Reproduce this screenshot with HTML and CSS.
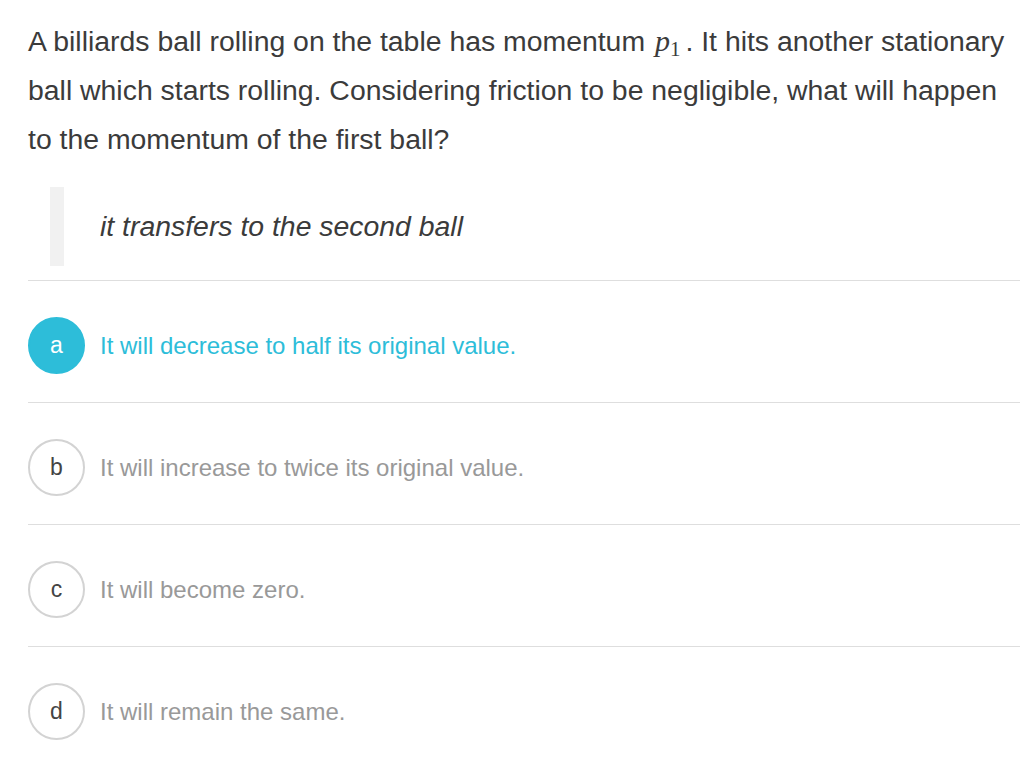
FILE: index.html
```html
<!DOCTYPE html>
<html lang="en">
<head>
<meta charset="utf-8">
<title>Question</title>
<link rel="stylesheet" href="styles.css">
</head>
<body>
<div class="page">
  <p class="question">A billiards ball rolling on the table has momentum <span class="math"><span class="mi">p</span><span class="mn">1</span></span>. It hits another stationary ball which starts rolling. Considering friction to be negligible, what will happen to the momentum of the first ball?</p>
  <blockquote class="answer"><span class="answer-text">it transfers to the second ball</span></blockquote>
  <ul class="options">
    <li class="option selected"><span class="letter">a</span><span class="opt-text">It will decrease to half its original value.</span></li>
    <li class="option"><span class="letter">b</span><span class="opt-text">It will increase to twice its original value.</span></li>
    <li class="option"><span class="letter">c</span><span class="opt-text">It will become zero.</span></li>
    <li class="option"><span class="letter">d</span><span class="opt-text">It will remain the same.</span></li>
  </ul>
</div>
</body>
</html>
```
FILE: styles.css
```css
* { box-sizing: border-box; }
html, body { margin: 0; padding: 0; background: #fff; }
body {
  font-family: "Liberation Sans", Arial, Helvetica, sans-serif;
  color: #3b3b3b;
}
.page {
  padding: 17px 4px 0 28px;
}
.question {
  margin: 0;
  font-size: 28.4px;
  line-height: 49px;
  color: #3b3b3b;
  height: 147px;
}
.math {
  font-family: "Liberation Serif", "Times New Roman", serif;
  font-size: 30px;
  line-height: 30px;
  margin-left: 2px;
  margin-right: 5px;
}
.mi { font-style: italic; }
.mn { font-size: 21px; line-height: 21px; vertical-align: -5px; }
.answer {
  margin: 23px 0 0 22px;
  border-left: 14px solid #f1f1f1;
  padding: 22px 0 22px 36px;
  height: 79px;
}
.answer-text {
  font-style: italic;
  font-size: 28.4px;
  line-height: 35px;
  color: #3b3b3b;
  display: block;
}
.options {
  list-style: none;
  margin: 14px 0 0 0;
  padding: 0;
}
.option {
  display: flex;
  align-items: center;
  border-top: 1px solid #dedede;
  padding: 36px 0 28px 0;
  gap: 15px;
}
.letter {
  width: 57px;
  height: 57px;
  border-radius: 50%;
  border: 2px solid #d3d3d3;
  display: flex;
  align-items: center;
  justify-content: center;
  font-size: 23px;
  color: #444;
  flex: none;
}
.opt-text {
  font-size: 24px;
  color: #999;
}
.option.selected .letter {
  background: #2dbdd9;
  border-color: #2dbdd9;
  color: #fff;
}
.option.selected .opt-text {
  color: #2dbdd9;
}
```
